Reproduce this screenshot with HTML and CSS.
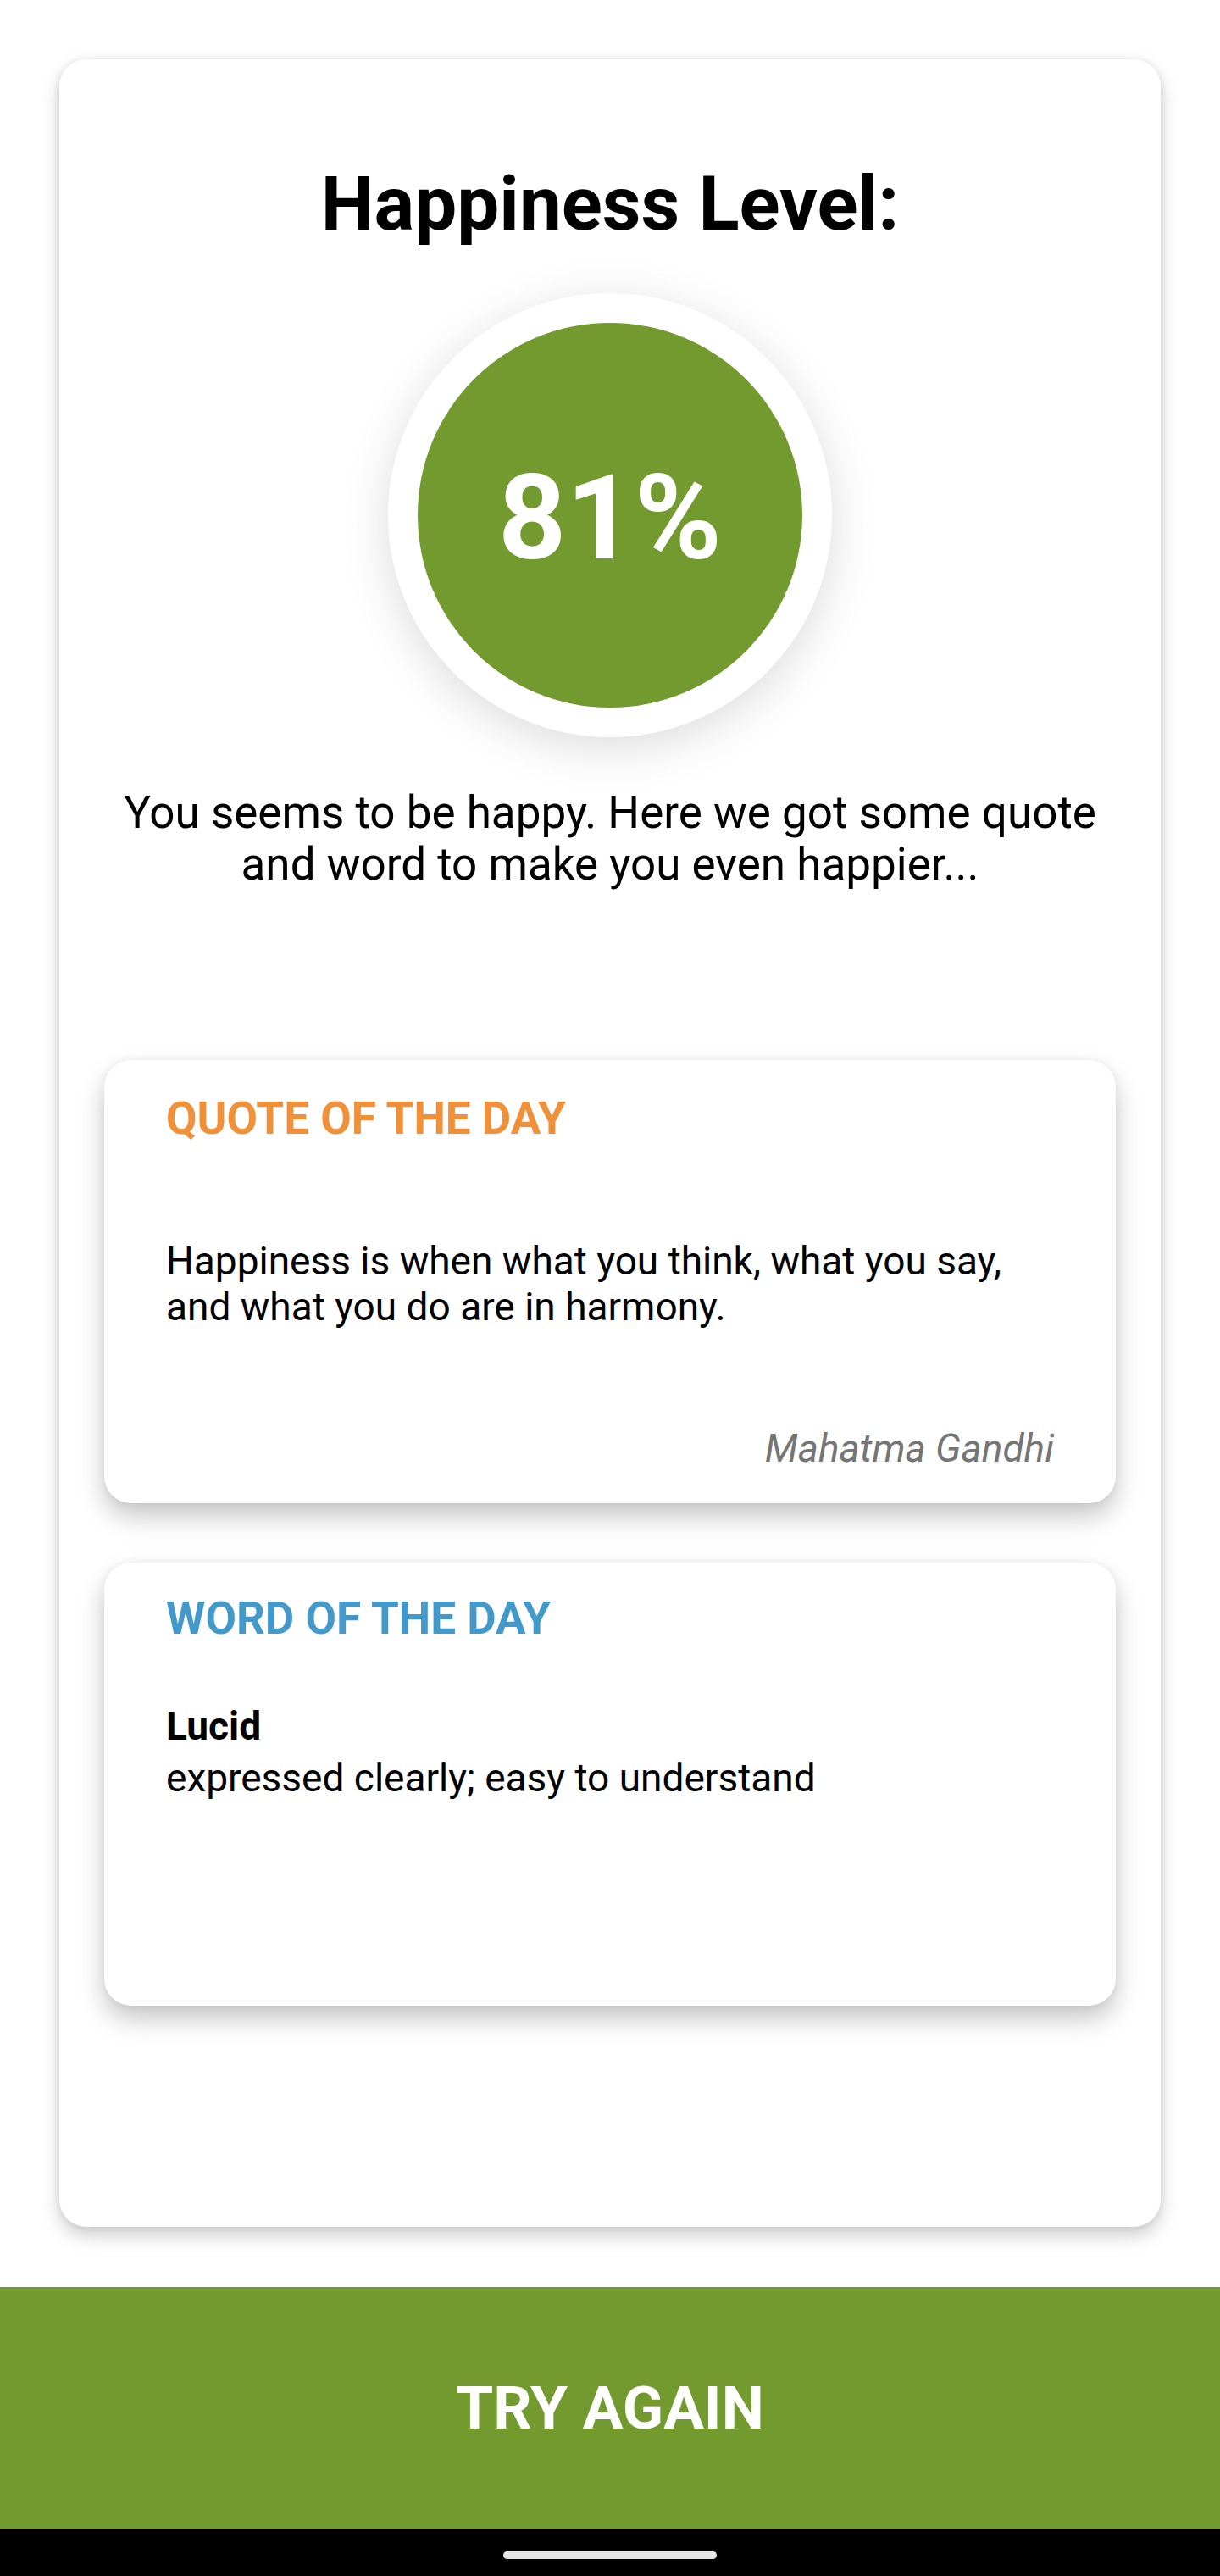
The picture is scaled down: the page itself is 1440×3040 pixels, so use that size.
FILE: index.html
```html
<!DOCTYPE html>
<html lang="en">
<head>
<meta charset="utf-8">
<title>Happiness Level</title>
<link rel="stylesheet" href="styles.css">
</head>
<body>
<div class="screen">
  <main class="panel">
    <h1 class="title">Happiness Level:</h1>
    <div class="ring">
      <div class="score">81%</div>
    </div>
    <p class="lead">You seems to be happy. Here we got some quote and word to make you even happier...</p>

    <section class="card quote-card">
      <h2 class="card-title quote-title">QUOTE OF THE DAY</h2>
      <p class="quote">Happiness is when what you think, what you say, and what you do are in harmony.</p>
      <p class="author">Mahatma Gandhi</p>
    </section>

    <section class="card word-card">
      <h2 class="card-title word-title">WORD OF THE DAY</h2>
      <p class="word">Lucid</p>
      <p class="meaning">expressed clearly; easy to understand</p>
    </section>
  </main>

  <button class="try-btn" type="button">TRY AGAIN</button>

  <div class="navbar"><span class="pill"></span></div>
</div>
</body>
</html>
```

FILE: styles.css
```css
* { box-sizing: border-box; }

html, body {
  margin: 0;
  padding: 0;
  background: #ffffff;
}

body {
  font-family: Roboto, "Liberation Sans", Arial, sans-serif;
  color: #000000;
}

.screen {
  width: 1440px;
  height: 3040px;
  display: flex;
  flex-direction: column;
  padding-top: 70px;
}

.panel {
  margin: 0 70px;
  height: 2558px;
  background: #ffffff;
  border-radius: 32px;
  box-shadow: 0 10px 22px rgba(0, 0, 0, 0.2), 0 0 10px rgba(0, 0, 0, 0.07);
  display: flex;
  flex-direction: column;
  align-items: center;
  padding: 119px 53px 0;
}

.title {
  margin: 0;
  font-size: 89px;
  font-weight: 700;
  line-height: 104px;
  text-align: center;
}

.ring {
  margin-top: 53px;
  width: 524px;
  height: 524px;
  border-radius: 50%;
  background: #ffffff;
  padding: 35px;
  box-shadow: 0 12px 56px rgba(0, 0, 0, 0.14);
  display: flex;
}

.score {
  flex: 1;
  border-radius: 50%;
  background: #729a2f;
  color: #ffffff;
  font-size: 140px;
  font-weight: 700;
  display: flex;
  align-items: center;
  justify-content: center;
  padding-top: 6px;
}

.lead {
  margin: 59px 0 0;
  padding: 0 10px;
  font-size: 53px;
  line-height: 61px;
  text-align: center;
}

.card {
  align-self: stretch;
  height: 523px;
  background: #ffffff;
  border-radius: 32px;
  box-shadow: 0 16px 30px rgba(0, 0, 0, 0.22), 0 0 12px rgba(0, 0, 0, 0.06);
  display: flex;
  flex-direction: column;
  padding: 39px 73px 38px;
}

.quote-card { margin-top: 200px; }
.word-card { margin-top: 70px; padding-top: 36px; }

.card-title {
  margin: 0;
  font-size: 53px;
  font-weight: 700;
  line-height: 61px;
}

.quote-title { color: #f0913a; }
.word-title { color: #4499cb; }

.quote {
  margin: 110px 0 0;
  font-size: 46px;
  line-height: 54px;
}

.author {
  margin: auto 0 0;
  font-size: 46px;
  line-height: 54px;
  font-style: italic;
  color: #757575;
  text-align: right;
}

.word {
  margin: 69px 0 0;
  font-size: 46px;
  line-height: 54px;
  font-weight: 700;
}

.meaning {
  margin: 7px 0 0;
  font-size: 46px;
  line-height: 54px;
}

.try-btn {
  margin-top: 71px;
  height: 285px;
  width: 100%;
  border: none;
  background: #729a2f;
  color: #ffffff;
  font-family: Roboto, "Liberation Sans", Arial, sans-serif;
  font-size: 71px;
  font-weight: 700;
  padding: 0;
}

.navbar {
  height: 56px;
  background: #000000;
  display: flex;
  justify-content: center;
  padding-top: 27px;
}

.pill {
  width: 252px;
  height: 9px;
  border-radius: 5px;
  background: #e6e6e6;
}
```
